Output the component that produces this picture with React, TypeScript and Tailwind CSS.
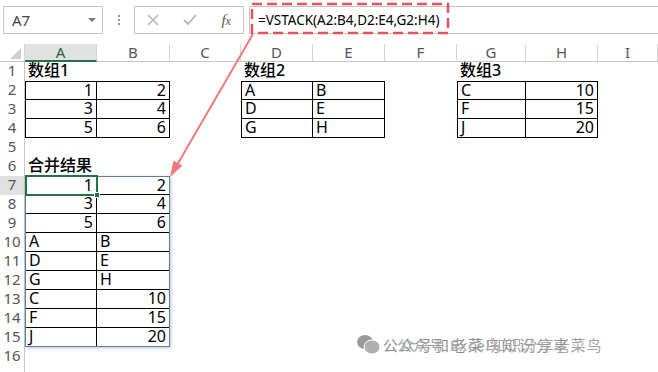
import React from "react";

const COLW = [
  "w-[72px]",
  "w-[73px]",
  "w-[71px]",
  "w-[72px]",
  "w-[72px]",
  "w-[72px]",
  "w-[69px]",
  "w-[72px]",
  "flex-1",
];
const LETTERS = ["A", "B", "C", "D", "E", "F", "G", "H", "I"];

type Cell = { t: string; right?: boolean; title?: boolean };

// key: "row-col" (col 0 = A)
const cells: Record<string, Cell> = {
  "1-0": { t: "数组1", title: true },
  "1-3": { t: "数组2", title: true },
  "1-6": { t: "数组3", title: true },
  "2-0": { t: "1", right: true },
  "2-1": { t: "2", right: true },
  "3-0": { t: "3", right: true },
  "3-1": { t: "4", right: true },
  "4-0": { t: "5", right: true },
  "4-1": { t: "6", right: true },
  "2-3": { t: "A" },
  "2-4": { t: "B" },
  "3-3": { t: "D" },
  "3-4": { t: "E" },
  "4-3": { t: "G" },
  "4-4": { t: "H" },
  "2-6": { t: "C" },
  "2-7": { t: "10", right: true },
  "3-6": { t: "F" },
  "3-7": { t: "15", right: true },
  "4-6": { t: "J" },
  "4-7": { t: "20", right: true },
  "6-0": { t: "合并结果", title: true },
};

const result: [string, string, boolean][] = [
  ["1", "2", true],
  ["3", "4", true],
  ["5", "6", true],
  ["A", "B", false],
  ["D", "E", false],
  ["G", "H", false],
  ["C", "10", false],
  ["F", "15", false],
  ["J", "20", false],
];
result.forEach(([a, b, num], i) => {
  cells[`${7 + i}-0`] = { t: a, right: num };
  cells[`${7 + i}-1`] = { t: b, right: num || /\d/.test(b) };
});

const tables = [
  { r0: 2, r1: 4, c0: 0, c1: 1 },
  { r0: 2, r1: 4, c0: 3, c1: 4 },
  { r0: 2, r1: 4, c0: 6, c1: 7 },
  { r0: 7, r1: 15, c0: 0, c1: 1 },
];

function borderOf(r: number, c: number) {
  const t = tables.find((x) => r >= x.r0 && r <= x.r1 && c >= x.c0 && c <= x.c1);
  if (!t) return "";
  let cls = "border-black border-r border-b";
  if (c === t.c0) cls += " border-l";
  if (r === t.r0) cls += " border-t";
  return cls;
}

function FormulaBar() {
  return (
    <div className="relative flex h-[44px] items-start pt-[6px] text-[#444]">
      <div className="ml-[3px] flex h-[28px] w-[100px] items-center justify-between border border-[#c6c6c6] pl-[8px] pr-[6px] text-[15px]">
        <span>A7</span>
        <span className="h-0 w-0 border-x-[4px] border-t-[4px] border-x-transparent border-t-[#777]" />
      </div>
      <div className="flex h-[28px] w-[31px] flex-col items-center justify-center gap-[2px]">
        <span className="h-[2px] w-[2px] bg-[#999]" />
        <span className="h-[2px] w-[2px] bg-[#999]" />
        <span className="h-[2px] w-[2px] bg-[#999]" />
      </div>
      <div className="flex h-[28px] w-[110px] items-center justify-around border border-[#c6c6c6]">
        <svg width="12" height="12" viewBox="0 0 12 12">
          <path d="M1 1L11 11M11 1L1 11" stroke="#b5b5b5" strokeWidth="1.6" />
        </svg>
        <svg width="14" height="12" viewBox="0 0 14 12">
          <path d="M1 6L5 10L13 1" stroke="#b5b5b5" strokeWidth="1.8" fill="none" />
        </svg>
        <span className="font-['Liberation_Serif',serif] text-[15px] italic text-[#555]">
          f<span className="text-[12px]">x</span>
        </span>
      </div>
      <div className="ml-[5px] flex h-[28px] flex-1 items-center border-y border-l border-[#c6c6c6] pl-[8px] text-[13.5px] text-black">
        =VSTACK(A2:B4,D2:E4,G2:H4)
      </div>
      <svg className="pointer-events-none absolute left-[250px] top-[2px]" width="200" height="33">
        <rect x="2" y="2" width="196" height="29" fill="none" stroke="#e8505b" strokeWidth="2.5" strokeDasharray="10 5" />
      </svg>
    </div>
  );
}

function Header() {
  return (
    <div className="flex h-[18px] border-b border-[#c6c6c6] text-[15px] leading-[17px] text-[#555]">
      <div className="relative w-[25px] border-r border-[#d4d4d4]">
        <svg className="absolute bottom-[2px] right-[3px]" width="11" height="11">
          <path d="M11 0L11 11L0 11Z" fill="#d0d0d0" />
        </svg>
      </div>
      {LETTERS.map((l, i) => (
        <div
          key={l}
          className={`${COLW[i]} text-center ${
            i === 0
              ? "-mb-[1px] border-b-2 border-r border-b-[#217346] border-r-[#d4d4d4] bg-[#e1e1e1] text-[#2f5e44]"
              : "border-r border-[#d4d4d4]"
          }`}
        >
          {l}
        </div>
      ))}
    </div>
  );
}

export default function App() {
  const rows = Array.from({ length: 17 }, (_, i) => i + 1);
  return (
    <div className="relative h-[372px] w-[658px] overflow-hidden bg-white font-['Noto_Sans','Noto_Sans_CJK_SC',sans-serif]">
      <FormulaBar />
      <Header />
      {rows.map((r) => (
        <div key={r} className="flex h-[19px] text-[16px] leading-[17px]">
          <div
            className={`w-[25px] border-r border-[#c6c6c6] text-center text-[15px] text-[#555] ${
              r === 7 ? "bg-[#e1e1e1]" : ""
            }`}
          >
            {r < 17 ? r : ""}
          </div>
          {LETTERS.map((_, c) => {
            const cell = cells[`${r}-${c}`];
            return (
              <div
                key={c}
                className={`${COLW[c]} whitespace-nowrap px-[3px] text-black ${borderOf(r, c)} ${
                  cell?.right ? "text-right" : "text-left"
                } ${cell?.title ? "font-medium" : ""}`}
              >
                {cell?.t}
              </div>
            );
          })}
        </div>
      ))}

      {/* spill range outline */}
      <div className="pointer-events-none absolute left-[25px] top-[176px] h-[171px] w-[145px] border border-[#5b7fa6] shadow-[1px_1px_3px_rgba(91,127,166,0.45)]" />
      {/* active cell */}
      <div className="pointer-events-none absolute left-[25px] top-[175px] h-[21px] w-[73px] border-2 border-[#217346]" />
      <div className="pointer-events-none absolute left-[94px] top-[192px] h-[6px] w-[6px] border border-white bg-[#217346]" />

      {/* annotation arrow */}
      <svg className="pointer-events-none absolute left-0 top-0" width="658" height="372">
        <line x1="253" y1="34" x2="177" y2="165" stroke="#f07a7a" strokeWidth="2" />
        <path d="M170 177L182.5 165.5L173.5 160.5Z" fill="#f07a7a" />
      </svg>

      {/* watermark */}
      <div className="pointer-events-none absolute left-[356px] top-[334px] flex items-center text-[15px] text-[#8c8c8c] [text-shadow:0_0_2px_#fff,0_0_2px_#fff]">
        <svg width="26" height="22" viewBox="0 0 26 22">
          <ellipse cx="9" cy="8" rx="8" ry="7" fill="#9a9a9a" />
          <ellipse cx="16" cy="13" rx="8" ry="7" fill="#b0b0b0" stroke="#fff" strokeWidth="1" />
        </svg>
        <div className="relative ml-[1px] whitespace-nowrap">
          <span className="tracking-[2px]">公众号和老菜鸟知识分享</span>
          <span className="absolute left-[14px] top-0 opacity-80 tracking-[1px]">
            公众号·Excel知识分享老菜鸟
          </span>
        </div>
      </div>
    </div>
  );
}
